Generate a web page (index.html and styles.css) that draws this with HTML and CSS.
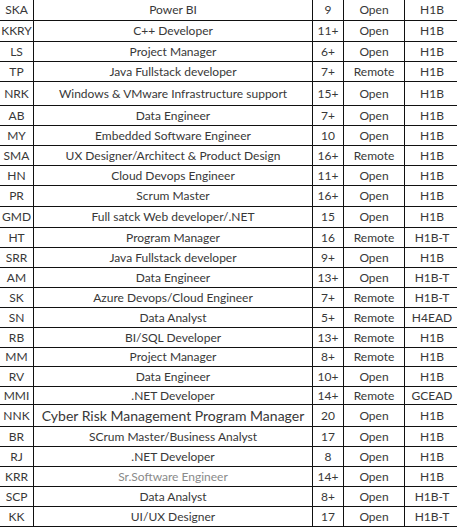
FILE: index.html
```html
<!DOCTYPE html>
<html>
<head>
<meta charset="utf-8">
<link rel="stylesheet" href="styles.css">
</head>
<body>
<table class="grid">
<colgroup><col class="c1"><col class="c2"><col class="c3"><col class="c4"><col class="c5"></colgroup>
<tbody>
<tr class="h21"><td>SKA</td><td>Power BI</td><td>9</td><td>Open</td><td>H1B</td></tr>
<tr class="h21"><td>KKRY</td><td>C++ Developer</td><td>11+</td><td>Open</td><td>H1B</td></tr>
<tr class="h20"><td>LS</td><td>Project Manager</td><td>6+</td><td>Open</td><td>H1B</td></tr>
<tr class="h20"><td>TP</td><td>Java Fullstack developer</td><td>7+</td><td>Remote</td><td>H1B</td></tr>
<tr class="h24"><td>NRK</td><td class="big">Windows &amp; VMware Infrastructure support</td><td>15+</td><td>Open</td><td>H1B</td></tr>
<tr class="h20"><td>AB</td><td>Data Engineer</td><td>7+</td><td>Open</td><td>H1B</td></tr>
<tr class="h20"><td>MY</td><td>Embedded Software Engineer</td><td>10</td><td>Open</td><td>H1B</td></tr>
<tr class="h20"><td>SMA</td><td>UX Designer/Architect &amp; Product Design</td><td>16+</td><td>Remote</td><td>H1B</td></tr>
<tr class="h20"><td>HN</td><td>Cloud Devops Engineer</td><td>11+</td><td>Open</td><td>H1B</td></tr>
<tr class="h21"><td>PR</td><td>Scrum Master</td><td>16+</td><td>Open</td><td>H1B</td></tr>
<tr class="h21"><td>GMD</td><td>Full satck Web developer/.NET</td><td>15</td><td>Open</td><td>H1B</td></tr>
<tr class="h20"><td>HT</td><td>Program Manager</td><td>16</td><td>Remote</td><td>H1B-T</td></tr>
<tr class="h20"><td>SRR</td><td>Java Fullstack developer</td><td>9+</td><td>Open</td><td>H1B</td></tr>
<tr class="h20"><td>AM</td><td>Data Engineer</td><td>13+</td><td>Open</td><td>H1B-T</td></tr>
<tr class="h20"><td>SK</td><td>Azure Devops/Cloud Engineer</td><td>7+</td><td>Remote</td><td>H1B-T</td></tr>
<tr class="h20"><td>SN</td><td>Data Analyst</td><td>5+</td><td>Remote</td><td>H4EAD</td></tr>
<tr class="h20"><td>RB</td><td>BI/SQL Developer</td><td>13+</td><td>Remote</td><td>H1B</td></tr>
<tr class="h19"><td>MM</td><td>Project Manager</td><td>8+</td><td>Remote</td><td>H1B</td></tr>
<tr class="h20"><td>RV</td><td>Data Engineer</td><td>10+</td><td>Open</td><td>H1B</td></tr>
<tr class="h18"><td>MMI</td><td>.NET Developer</td><td>14+</td><td>Remote</td><td>GCEAD</td></tr>
<tr class="h22"><td>NNK</td><td class="bigger">Cyber Risk Management Program Manager</td><td>20</td><td>Open</td><td>H1B</td></tr>
<tr class="h20"><td>BR</td><td>SCrum Master/Business Analyst</td><td>17</td><td>Open</td><td>H1B</td></tr>
<tr class="h20"><td>RJ</td><td>.NET Developer</td><td>8</td><td>Open</td><td>H1B</td></tr>
<tr class="h20"><td>KRR</td><td class="muted">Sr.Software Engineer</td><td>14+</td><td>Open</td><td>H1B</td></tr>
<tr class="h20"><td>SCP</td><td>Data Analyst</td><td>8+</td><td>Open</td><td>H1B-T</td></tr>
<tr class="h20"><td>KK</td><td>UI/UX Designer</td><td>17</td><td>Open</td><td>H1B-T</td></tr>
</tbody>
</table>
</body>
</html>
```
FILE: styles.css
```css
html, body {
  margin: 0;
  padding: 0;
  background: #ffffff;
  overflow: hidden;
}
.grid {
  border-collapse: collapse;
  table-layout: fixed;
  width: 460px;
  margin: -1px 0 0 -1px;
  font-family: Lato, "Open Sans", sans-serif;
  font-size: 12px;
  color: #383838;
}
.c1 { width: 34px; }
.c2 { width: 279px; }
.c3 { width: 31px; }
.c4 { width: 61px; }
.c5 { width: 55px; }
.grid td {
  border: 1px solid #111;
  padding: 0;
  text-align: center;
  vertical-align: middle;
  white-space: nowrap;
  overflow: hidden;
  line-height: 14px;
}
.h18 { height: 18px; }
.h19 { height: 19px; }
.h20 { height: 20px; }
.h21 { height: 21px; }
.h22 { height: 22px; }
.h24 { height: 24px; }
.grid td.big { font-size: 12px; }
.grid td.bigger { font-size: 14px; }
.grid td.muted { color: #8a8a8a; }
```
